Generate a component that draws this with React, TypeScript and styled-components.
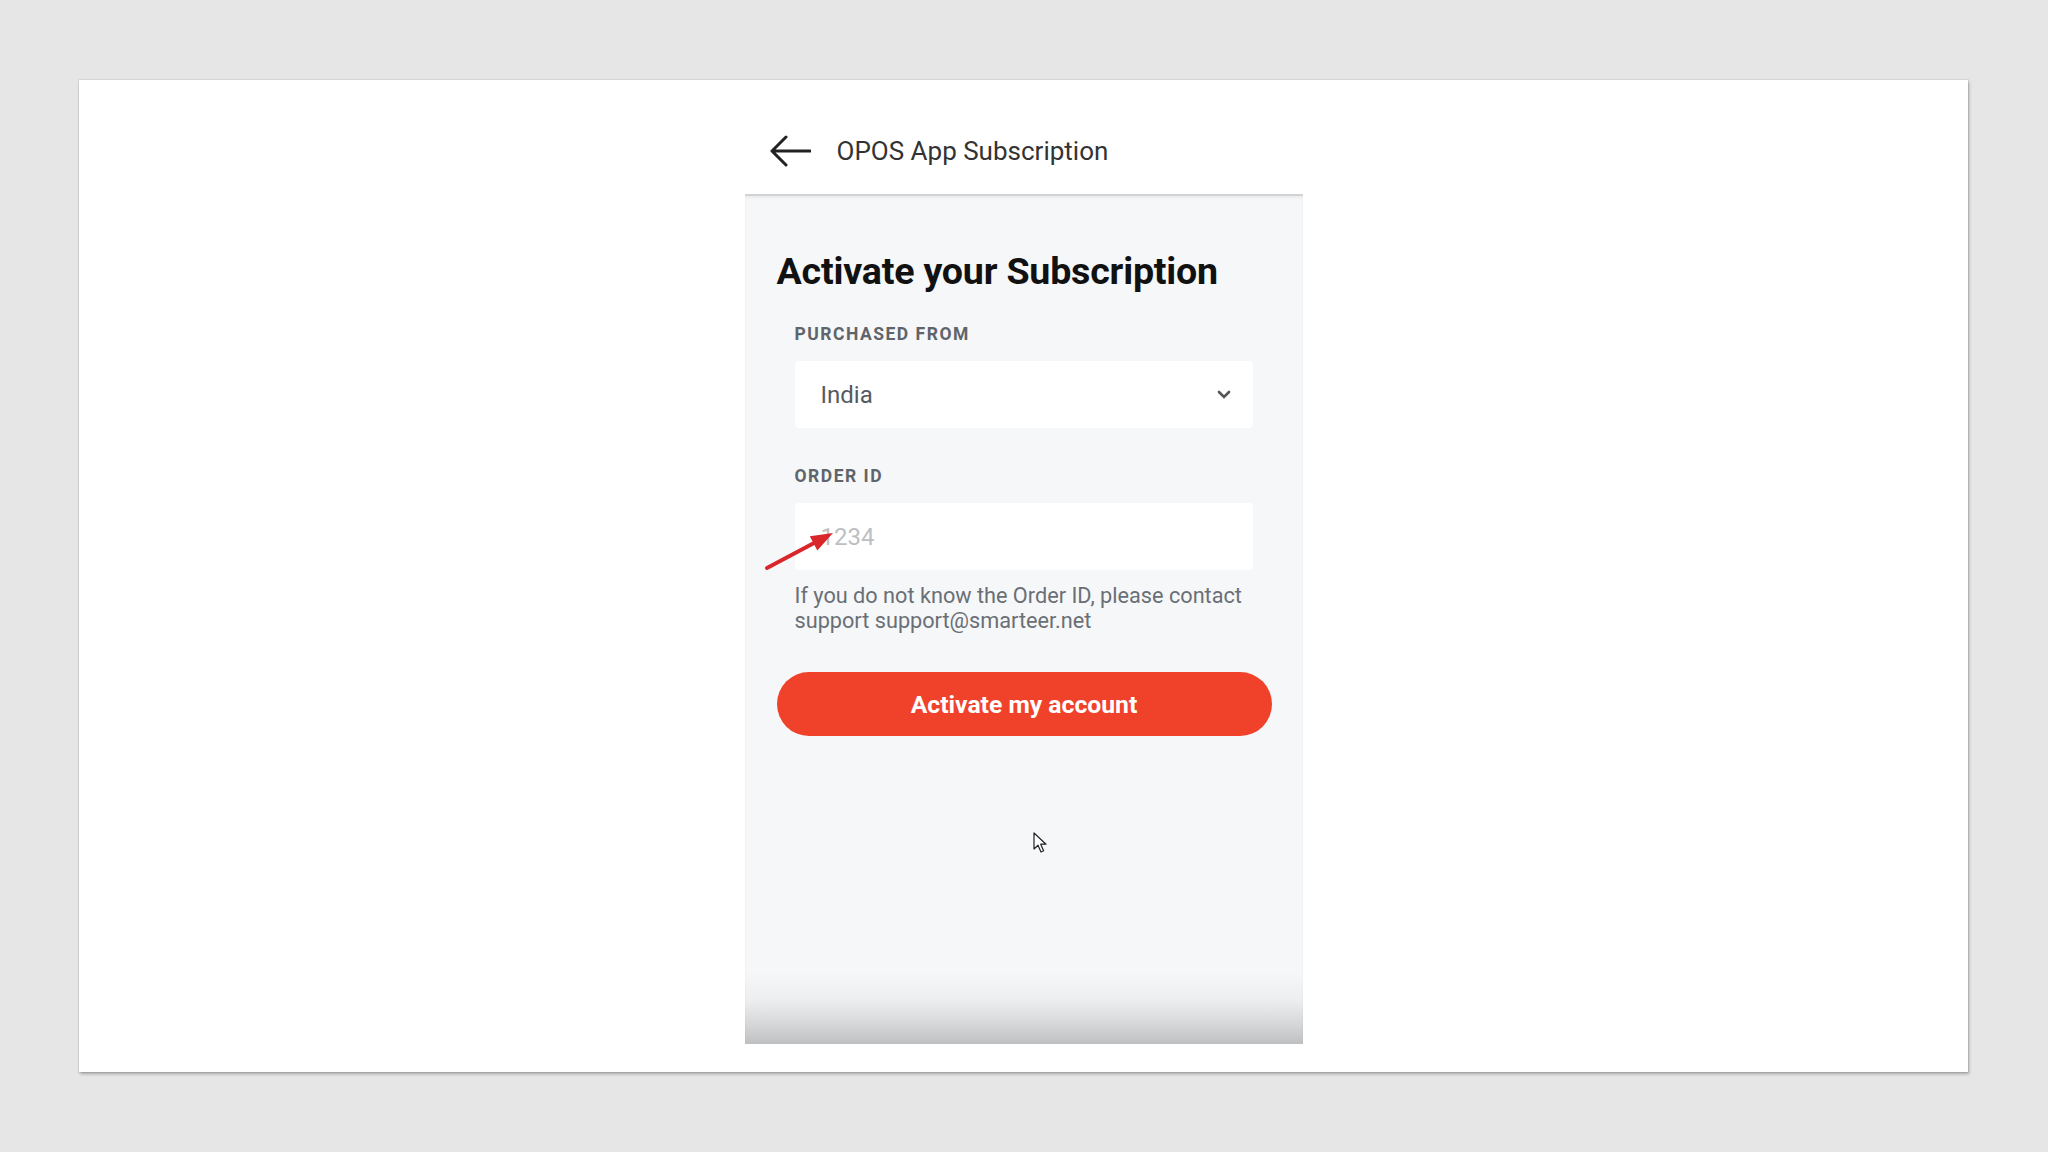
import React from 'react';
import styled, { createGlobalStyle } from 'styled-components';

const GlobalStyle = createGlobalStyle`
  html, body {
    margin: 0;
    padding: 0;
    background: #e6e6e7;
  }
  body {
    font-family: Roboto, 'Liberation Sans', Arial, sans-serif;
  }
  * {
    box-sizing: border-box;
  }
`;

const Stage = styled.div`
  width: 2048px;
  height: 1152px;
  padding: 80px 0 0 79px;
`;

const Card = styled.div`
  width: 1889px;
  height: 992px;
  background: #fff;
  box-shadow: 0 0 0 1px rgba(0, 0, 0, 0.06), 1px 2px 3px rgba(0, 0, 0, 0.28);
  display: flex;
  flex-direction: column;
  align-items: center;
`;

const Phone = styled.div`
  width: 558px;
  height: 964px;
  display: flex;
  flex-direction: column;
`;

const AppBar = styled.header`
  height: 116px;
  padding: 28px 0 0 24px;
  display: flex;
  align-items: center;
  gap: 26px;
  background: #fff;
  border-bottom: 2px solid #d2d2d4;
`;

const BackButton = styled.button`
  border: 0;
  background: none;
  padding: 0;
  width: 42px;
  height: 32px;
  display: flex;
  align-items: center;
  cursor: pointer;
`;

const AppTitle = styled.h1`
  margin: 0;
  font-size: 26px;
  font-weight: 400;
  color: #333;
  line-height: 32px;
`;

const Panel = styled.main`
  position: relative;
  flex: 1;
  padding: 0 31px 0 32px;
  box-shadow: inset 0 2px 3px rgba(0, 0, 0, 0.05);
  background: linear-gradient(
    to bottom,
    #f6f7f9 0,
    #f6f7f9 calc(100% - 72px),
    #eceef0 calc(100% - 44px),
    #d6d7d9 calc(100% - 20px),
    #bfc0c2 100%
  );
`;

const Heading = styled.h2`
  margin: 53px 0 0;
  font-size: 37.6px;
  line-height: 44px;
  font-weight: 700;
  color: #111;
  letter-spacing: -0.2px;
`;

const Form = styled.form`
  padding: 0 19px 0 18px;
  display: flex;
  flex-direction: column;
`;

const Label = styled.label<{ $gap: number }>`
  margin-top: ${(p) => p.$gap}px;
  font-size: 17.5px;
  line-height: 20px;
  font-weight: 700;
  letter-spacing: 1.5px;
  text-transform: uppercase;
  color: #5f646a;
`;

const Control = styled.div`
  margin-top: 17px;
  height: 67px;
  background: #fff;
  border-radius: 4px;
  display: flex;
  align-items: center;
  padding: 0 22px 0 26px;
`;

const SelectValue = styled.span`
  flex: 1;
  font-size: 24px;
  color: #555a60;
`;

const TextInput = styled.input`
  flex: 1;
  border: 0;
  outline: none;
  background: transparent;
  padding: 0;
  font-family: inherit;
  font-size: 24px;
  color: #333;
  &::placeholder {
    color: #bdbfc2;
  }
`;

const Hint = styled.p`
  margin: 13px 0 0;
  font-size: 21.7px;
  line-height: 25px;
  color: #6a6f76;
`;

const ActivateButton = styled.button`
  margin-top: 39px;
  width: 100%;
  height: 64px;
  border: 0;
  border-radius: 32px;
  background: #f0422b;
  color: #fff;
  font-family: inherit;
  font-size: 24.7px;
  font-weight: 700;
  cursor: pointer;
`;

const Annotation = styled.svg`
  position: absolute;
  left: 16px;
  top: 330px;
`;

const Pointer = styled.svg`
  position: absolute;
  left: 288px;
  top: 636px;
`;

function BackArrow() {
  return (
    <svg width="42" height="32" viewBox="0 0 42 32" fill="none">
      <path
        d="M41 16H3M17 2L3 16L17 30"
        stroke="#222"
        strokeWidth="3"
        strokeLinecap="round"
        strokeLinejoin="round"
      />
    </svg>
  );
}

function Chevron() {
  return (
    <svg width="14" height="9" viewBox="0 0 14 9" fill="none">
      <path d="M2 2L7 7L12 2" stroke="#555" strokeWidth="2.6" strokeLinecap="round" />
    </svg>
  );
}

export default function App() {
  return (
    <>
      <GlobalStyle />
      <Stage>
        <Card>
          <Phone>
            <AppBar>
              <BackButton aria-label="Back">
                <BackArrow />
              </BackButton>
              <AppTitle>OPOS App Subscription</AppTitle>
            </AppBar>
            <Panel>
              <Heading>Activate your Subscription</Heading>
              <Form onSubmit={(e) => e.preventDefault()}>
                <Label $gap={31}>Purchased from</Label>
                <Control>
                  <SelectValue>India</SelectValue>
                  <Chevron />
                </Control>
                <Label $gap={38}>Order ID</Label>
                <Control>
                  <TextInput placeholder="1234" />
                </Control>
                <Hint>
                  If you do not know the Order ID, please contact support support@smarteer.net
                </Hint>
              </Form>
              <ActivateButton>Activate my account</ActivateButton>

              {/* red marker pointing at the order field */}
              <Annotation width="80" height="48" viewBox="0 0 80 48">
                <path d="M6 42L52.6 17.3" stroke="#d8262b" strokeWidth="4" strokeLinecap="round" />
                <path d="M72 7L56.3 24.4L48.8 10.2Z" fill="#d8262b" />
              </Annotation>

              <Pointer width="16" height="22" viewBox="0 0 16 22">
                <path
                  d="M1 1V17L5 13.2L8 20L10.6 18.8L7.7 12.2H13Z"
                  fill="#fff"
                  stroke="#222"
                  strokeWidth="1.2"
                  strokeLinejoin="round"
                />
              </Pointer>
            </Panel>
          </Phone>
        </Card>
      </Stage>
    </>
  );
}
